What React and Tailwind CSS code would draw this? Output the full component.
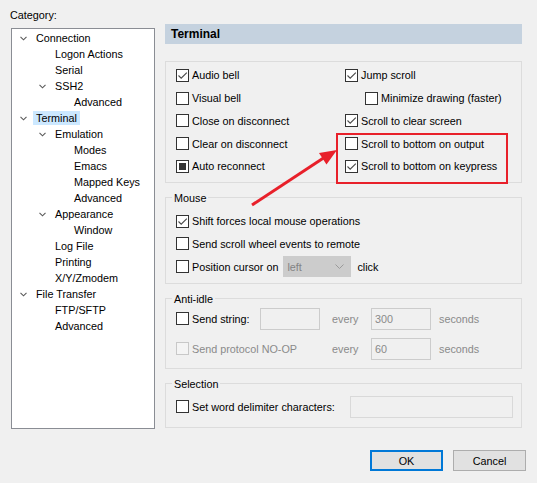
import React from 'react';

const tree = [
  { label: 'Connection', level: 0, open: true },
  { label: 'Logon Actions', level: 1 },
  { label: 'Serial', level: 1 },
  { label: 'SSH2', level: 1, open: true },
  { label: 'Advanced', level: 2 },
  { label: 'Terminal', level: 0, open: true, selected: true },
  { label: 'Emulation', level: 1, open: true },
  { label: 'Modes', level: 2 },
  { label: 'Emacs', level: 2 },
  { label: 'Mapped Keys', level: 2 },
  { label: 'Advanced', level: 2 },
  { label: 'Appearance', level: 1, open: true },
  { label: 'Window', level: 2 },
  { label: 'Log File', level: 1 },
  { label: 'Printing', level: 1 },
  { label: 'X/Y/Zmodem', level: 1 },
  { label: 'File Transfer', level: 0, open: true },
  { label: 'FTP/SFTP', level: 1 },
  { label: 'Advanced', level: 1 },
];

const indent = ['pl-[8px]', 'pl-[27px]', 'pl-[46px]'];

function Chevron() {
  return (
    <svg width="7" height="5" viewBox="0 0 7 5">
      <path d="M0.5 0.8 L3.5 3.8 L6.5 0.8" fill="none" stroke="#5a5a5a" strokeWidth="1.1" />
    </svg>
  );
}

function Check({ state = 'off', disabled = false }) {
  return (
    <span
      className={
        disabled
          ? 'inline-flex h-[13px] w-[13px] shrink-0 items-center justify-center border border-[#c8c8c8] bg-[#f4f4f4]'
          : 'inline-flex h-[13px] w-[13px] shrink-0 items-center justify-center border border-[#333333] bg-white'
      }
    >
      {state === 'on' && (
        <svg width="11" height="11" viewBox="0 0 11 11">
          <path d="M1.5 5.5 L4.2 8.2 L9.8 2.6" fill="none" stroke="#4a4a4a" strokeWidth="1.1" />
        </svg>
      )}
      {state === 'mixed' && <span className="h-[7px] w-[7px] bg-[#333333]" />}
    </span>
  );
}

function Opt({ label, state, disabled, className = '' }) {
  return (
    <div className={'flex h-[22.75px] items-center ' + className}>
      <Check state={state} disabled={disabled} />
      <span className={disabled ? 'ml-[3px] text-[#8a8a8a]' : 'ml-[3px]'}>{label}</span>
    </div>
  );
}

function Group({ title, children, className = '' }) {
  return (
    <fieldset className={'border border-[#dcdcdc] ' + className}>
      <legend className="ml-[6px] px-[2px] leading-[14px]">{title}</legend>
      {children}
    </fieldset>
  );
}

export default function App() {
  return (
    <div className="relative h-[483px] w-[537px] overflow-hidden bg-[#f0f0f0] pt-[8px] font-['Liberation_Sans',Arial,sans-serif] text-[10.8px] leading-[14px] text-black">
      <div className="flex">
        <div className="pl-[10px]">
          <div className="leading-[14px]">Category:</div>
          <div className="ml-[1px] mt-[6px] h-[401px] w-[144px] border border-[#8a8d94] bg-white pt-[1px]">
            {tree.map((t, i) => (
              <div key={i} className={'flex h-[16px] items-center ' + indent[t.level]}>
                <span className="flex w-[16px] shrink-0 items-center">{t.open && <Chevron />}</span>
                {t.selected ? (
                  <span className="-ml-[3px] bg-[#cce8ff] px-[3px] leading-[14px]">{t.label}</span>
                ) : (
                  <span>{t.label}</span>
                )}
              </div>
            ))}
          </div>
        </div>

        <div className="ml-[10px] w-[357px] pt-[16px]">
          <div className="flex h-[20px] items-center bg-[#c5d2df] pl-[6px] text-[12px] font-bold">Terminal</div>

          <div className="mt-[17px] flex border border-[#dcdcdc] pb-[4px] pl-[10px] pt-[2px]">
            <div className="w-[169px]">
              <Opt label="Audio bell" state="on" />
              <Opt label="Visual bell" />
              <Opt label="Close on disconnect" />
              <Opt label="Clear on disconnect" />
              <Opt label="Auto reconnect" state="mixed" />
            </div>
            <div>
              <Opt label="Jump scroll" state="on" />
              <Opt label="Minimize drawing (faster)" className="pl-[20px]" />
              <Opt label="Scroll to clear screen" state="on" />
              <Opt label="Scroll to bottom on output" />
              <Opt label="Scroll to bottom on keypress" state="on" />
            </div>
          </div>

          <Group title="Mouse" className="mt-[8px]">
            <div className="pb-[5px] pl-[10px] pt-[5px]">
              <Opt label="Shift forces local mouse operations" state="on" className="h-[22.5px]" />
              <Opt label="Send scroll wheel events to remote" className="h-[22.5px]" />
              <div className="flex h-[22.5px] items-center">
                <Check />
                <span className="ml-[3px]">Position cursor on</span>
                <div className="ml-[5px] flex h-[21px] w-[68px] items-center justify-between border border-[#cccccc] bg-[#cccccc] pl-[3px] pr-[6px] text-[#838383]">
                  <span>left</span>
                  <svg width="9" height="5" viewBox="0 0 9 5">
                    <path d="M0.5 0.5 L4.5 4.5 L8.5 0.5" fill="none" stroke="#9a9a9a" strokeWidth="1" />
                  </svg>
                </div>
                <span className="ml-[6px]">click</span>
              </div>
            </div>
          </Group>

          <Group title="Anti-idle" className="mt-[8px]">
            <div className="pb-[8px] pl-[10px] pt-[2px]">
              <div className="flex h-[22px] items-center">
                <div className="flex w-[84px] items-center">
                  <Check />
                  <span className="ml-[3px]">Send string:</span>
                </div>
                <div className="h-[22px] w-[60px] border border-[#cccccc] bg-[#f0f0f0]" />
                <span className="ml-[12px] w-[39px] text-[#8a8a8a]">every</span>
                <div className="flex h-[22px] w-[60px] items-center border border-[#cccccc] bg-[#f0f0f0] pl-[3px] text-[#8a8a8a]">300</div>
                <span className="ml-[8px] text-[#8a8a8a]">seconds</span>
              </div>
              <div className="mt-[8px] flex h-[22px] items-center">
                <div className="flex w-[156px] items-center">
                  <Check disabled />
                  <span className="ml-[3px] text-[#8a8a8a]">Send protocol NO-OP</span>
                </div>
                <span className="w-[39px] text-[#8a8a8a]">every</span>
                <div className="flex h-[22px] w-[60px] items-center border border-[#cccccc] bg-[#f0f0f0] pl-[3px] text-[#8a8a8a]">60</div>
                <span className="ml-[8px] text-[#8a8a8a]">seconds</span>
              </div>
            </div>
          </Group>

          <Group title="Selection" className="mt-[8px]">
            <div className="flex items-center pb-[9px] pl-[10px] pt-[5px]">
              <div className="flex w-[174px] items-center">
                <Check />
                <span className="ml-[3px]">Set word delimiter characters:</span>
              </div>
              <div className="h-[22px] w-[163px] border border-[#d9d9d9] bg-[#f0f0f0]" />
            </div>
          </Group>
        </div>
      </div>

      <div className="mt-[21px] flex justify-end gap-[10px] pr-[11px]">
        <button className="flex h-[21px] w-[73px] items-center justify-center border-2 border-[#0078d7] bg-[#e1e1e1]">OK</button>
        <button className="flex h-[21px] w-[73px] items-center justify-center border border-[#adadad] bg-[#e1e1e1]">Cancel</button>
      </div>

      <svg className="pointer-events-none absolute left-0 top-0" width="537" height="483" viewBox="0 0 537 483">
        <rect x="337" y="134" width="170" height="49" fill="none" stroke="#e8202a" strokeWidth="2" />
        <line x1="252" y1="205" x2="325" y2="157" stroke="#e8202a" strokeWidth="3" />
        <polygon points="337,150 326.5,164.5 319,153" fill="#e8202a" />
      </svg>
    </div>
  );
}
